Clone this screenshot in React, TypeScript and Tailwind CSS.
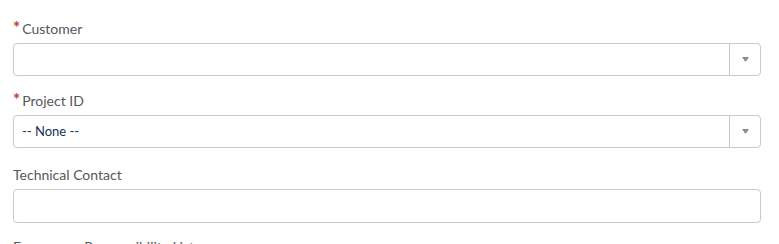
import React from "react";

function Label({ text, required }: { text: string; required?: boolean }) {
  return (
    <div className="h-[20px] leading-[20px] mb-[4px] text-[14px] text-[#54575c] flex items-center">
      {required && <span className="text-[#c23934] mr-[2px] text-[17px] font-bold leading-[14px] relative top-[-1px]">*</span>}
      <span>{text}</span>
    </div>
  );
}

function Select({ value }: { value?: string }) {
  return (
    <div className="h-[33px] border border-[#c9c9c9] rounded-[4px] flex bg-white">
      <div className="flex-1 flex items-center pl-[8px] text-[13px] text-[#16325c]">{value}</div>
      <div className="w-[31px] border-l border-[#c9c9c9] flex items-center justify-center">
        <svg width="7" height="5" viewBox="0 0 7 5">
          <path d="M0 0 H7 L3.5 5 Z" fill="#8a8a8a" />
        </svg>
      </div>
    </div>
  );
}

export default function App() {
  return (
    <div className="w-[779px] h-[244px] overflow-hidden bg-white pt-[19px] pl-[13px] pr-[18px]" style={{ fontFamily: "Lato, 'Open Sans', sans-serif" }}>
      <div className="mb-[15px]">
        <Label text="Customer" required />
        <Select />
      </div>
      <div className="mb-[17px]">
        <Label text="Project ID" required />
        <Select value="-- None --" />
      </div>
      <div className="mb-[14px]">
        <Label text="Technical Contact" />
        <div className="h-[34px] border border-[#c9c9c9] rounded-[4px] bg-white" />
      </div>
      <div>
        <Label text="Emergency Responsibility List" />
      </div>
    </div>
  );
}
